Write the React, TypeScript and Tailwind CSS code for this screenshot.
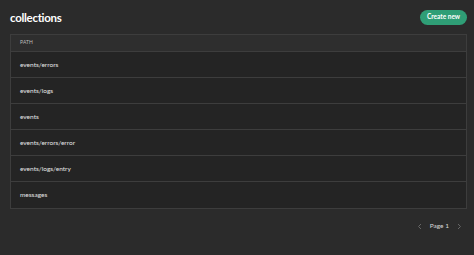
import React from "react";

const rows = [
  "events/errors",
  "events/logs",
  "events",
  "events/errors/error",
  "events/logs/entry",
  "messages",
];

export default function App() {
  return (
    <div className="w-[474px] h-[255px] bg-[#2b2b2b] pl-[10px] pr-[7px] pt-[10px] font-['Lato',sans-serif] text-[#e6e6e6] overflow-hidden">
      <div className="flex items-center justify-between h-[15px]">
        <h1 className="text-[11.5px] font-bold leading-none tracking-[-0.3px] text-white">collections</h1>
        <button className="h-[15px] w-[47px] rounded-full bg-[#2f9e76] text-white text-[6.5px] font-bold leading-none">
          Create new
        </button>
      </div>
      <div className="mt-[9px] border border-[#3d3d3d]">
        <div className="h-[17px] flex items-center px-[9px] bg-[#2e2e2e] text-[5px] tracking-wide text-[#bdbdbd] border-b border-[#3d3d3d]">
          PATH
        </div>
        {rows.map((r, i) => (
          <div
            key={r}
            className={`h-[26px] flex items-center px-[9px] bg-[#242424] text-[6.5px] ${
              i < rows.length - 1 ? "border-b border-[#3d3d3d]" : ""
            }`}
          >
            {r}
          </div>
        ))}
      </div>
      <div className="mt-[11px] h-[12px] flex items-center justify-end gap-[8px] pr-[5px] text-[6.5px]">
        <svg width="5" height="7" viewBox="0 0 5 7" className="text-[#666]">
          <path d="M4 1 L1.5 3.5 L4 6" stroke="currentColor" strokeWidth="1" fill="none" />
        </svg>
        <span className="text-[#d8d8d8]">Page 1</span>
        <svg width="5" height="7" viewBox="0 0 5 7" className="text-[#666]">
          <path d="M1 1 L3.5 3.5 L1 6" stroke="currentColor" strokeWidth="1" fill="none" />
        </svg>
      </div>
    </div>
  );
}
